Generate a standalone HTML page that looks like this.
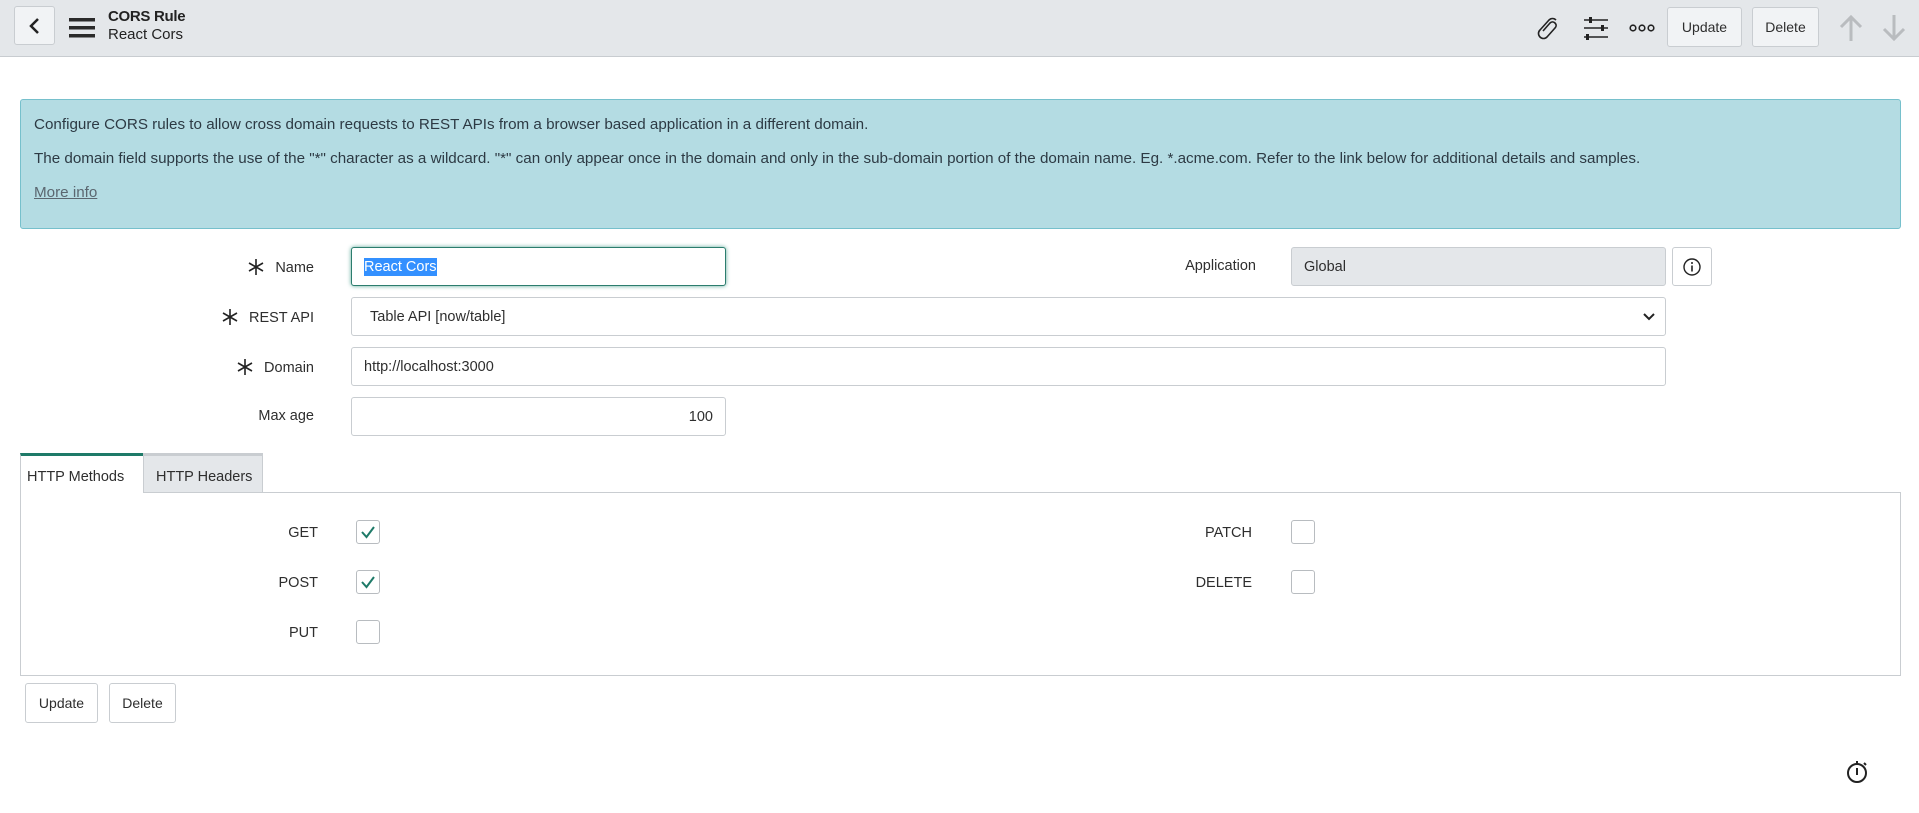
<!DOCTYPE html>
<html><head><meta charset="utf-8"><style>
*{box-sizing:border-box;margin:0;padding:0}
body{width:1919px;height:813px;background:#fff;font-family:"Liberation Sans",sans-serif;color:#2e2e2e;position:relative;overflow:hidden;font-size:14px}
.a{position:absolute}
.hdr{left:0;top:0;width:1919px;height:57px;background:#e4e7ea;border-bottom:1px solid #c8ccd0}
.btn{position:absolute;background:#f1f3f5;border:1px solid #c9cdd1;border-radius:3px;font-size:14px;display:flex;align-items:center;justify-content:center;color:#2e2e2e}
.wbtn{background:#fff}
.info{left:20px;top:99px;width:1881px;height:130px;background:#b4dce3;border:1px solid #76c0cc;border-radius:3px}
.info p{position:absolute;left:13px;font-size:15.2px;color:#2d3a44;white-space:nowrap}
.lbl{position:absolute;text-align:right;font-size:14.5px;color:#2e2e2e}
.inp{position:absolute;border:1px solid #c9cdd1;border-radius:3px;background:#fff;font-size:14.5px;display:flex;align-items:center;padding:0 12px}
.cb{position:absolute;width:24px;height:24px;border:1px solid #b8bcc0;border-radius:3px;background:#fff}
.star{display:inline-block;width:18px;height:18px;vertical-align:-4px;margin-right:10px}
</style></head><body>
<div class="a hdr"></div>
<div class="btn" style="left:14px;top:6px;width:41px;height:39px"><svg width="14" height="18" viewBox="0 0 14 18"><path d="M10 2 L3 9 L10 16" stroke="#222" stroke-width="2.5" fill="none"/></svg></div>
<svg class="a" style="left:69px;top:18px" width="26" height="20"><rect y="0" width="26" height="3.5" fill="#2a2a2a"/><rect y="8" width="26" height="3.5" fill="#2a2a2a"/><rect y="16" width="26" height="3.5" fill="#2a2a2a"/></svg>
<div class="a" style="left:108px;top:8px;font-size:15px;font-weight:bold;color:#222;letter-spacing:-0.3px">CORS Rule</div>
<div class="a" style="left:108px;top:26px;font-size:15px;color:#222">React Cors</div>
<svg class="a" style="left:1536px;top:16px" width="26" height="26" viewBox="0 0 26 26"><path d="M20 4 C18 2 15 2 13 4 L4 14 C2 16 2 19 4 21 C6 23 9 23 11 21 L19 12 C20.5 10.5 20.5 8.5 19 7 C17.5 5.5 15.5 5.5 14 7 L7 15" stroke="#222" stroke-width="1.6" fill="none"/></svg>
<svg class="a" style="left:1583px;top:16px" width="26" height="26"><path d="M1 4H25M1 12H25M1 21H25" stroke="#222" stroke-width="1.6"/><rect x="6" y="1" width="3" height="6" fill="#222"/><rect x="18" y="9" width="3" height="6" fill="#222"/><rect x="3" y="18" width="3" height="6" fill="#222"/></svg>
<svg class="a" style="left:1629px;top:23px" width="26" height="10"><circle cx="4" cy="5" r="2.8" stroke="#222" stroke-width="1.6" fill="none"/><circle cx="13" cy="5" r="2.8" stroke="#222" stroke-width="1.6" fill="none"/><circle cx="22" cy="5" r="2.8" stroke="#222" stroke-width="1.6" fill="none"/></svg>
<div class="btn" style="left:1667px;top:7px;width:75px;height:40px">Update</div>
<div class="btn" style="left:1752px;top:7px;width:67px;height:40px">Delete</div>
<svg class="a" style="left:1838px;top:14px" width="26" height="28"><path d="M13 27V3M3 13L13 3L23 13" stroke="#b9bcbf" stroke-width="3" fill="none"/></svg>
<svg class="a" style="left:1881px;top:14px" width="26" height="28"><path d="M13 1V25M3 15L13 25L23 15" stroke="#b9bcbf" stroke-width="3" fill="none"/></svg>

<div class="a info">
<p style="top:16px">Configure CORS rules to allow cross domain requests to REST APIs from a browser based application in a different domain.</p>
<p style="top:50px">The domain field supports the use of the "*" character as a wildcard. "*" can only appear once in the domain and only in the sub-domain portion of the domain name. Eg. *.acme.com. Refer to the link below for additional details and samples.</p>
<p style="top:84px;text-decoration:underline;color:#5b6770">More info</p>
</div>

<div class="lbl" style="left:150px;top:258px;width:164px"><svg class="star" viewBox="0 0 18 18"><path d="M9 1V17M2 5L16 13M16 5L2 13" stroke="#222" stroke-width="1.6"/></svg>Name</div>
<div class="inp" style="left:351px;top:247px;width:375px;height:39px;border:1px solid #2c7d6e;box-shadow:0 0 4px #5aa898"><span style="background:#3390ff;color:#fff;padding:1px 0">React Cors</span></div>
<div class="lbl" style="left:150px;top:308px;width:164px"><svg class="star" viewBox="0 0 18 18"><path d="M9 1V17M2 5L16 13M16 5L2 13" stroke="#222" stroke-width="1.6"/></svg>REST API</div>
<div class="inp" style="left:351px;top:297px;width:1315px;height:39px;padding-left:18px">Table API [now/table]<svg style="position:absolute;right:10px;top:15px" width="12" height="8"><path d="M1 1L6 6L11 1" stroke="#222" stroke-width="2" fill="none"/></svg></div>
<div class="lbl" style="left:150px;top:358px;width:164px"><svg class="star" viewBox="0 0 18 18"><path d="M9 1V17M2 5L16 13M16 5L2 13" stroke="#222" stroke-width="1.6"/></svg>Domain</div>
<div class="inp" style="left:351px;top:347px;width:1315px;height:39px">http://localhost:3000</div>
<div class="lbl" style="left:150px;top:408px;width:164px">Max age</div>
<div class="inp" style="left:351px;top:397px;width:375px;height:39px;justify-content:flex-end">100</div>
<div class="lbl" style="left:1150px;top:258px;width:106px">Application</div>
<div class="inp" style="left:1291px;top:247px;width:375px;height:39px;background:#e4e7ea">Global</div>
<div class="btn wbtn" style="left:1672px;top:247px;width:40px;height:39px"><svg width="20" height="20"><circle cx="10" cy="10" r="8" stroke="#222" stroke-width="1.4" fill="none"/><rect x="9.2" y="8.5" width="1.6" height="6" fill="#222"/><circle cx="10" cy="6" r="1" fill="#222"/></svg></div>

<div class="a" style="left:20px;top:492px;width:1881px;height:184px;border:1px solid #c9cdd1"></div>
<div class="a" style="left:20px;top:453px;width:123px;height:40px;background:#fff;border-top:3px solid #1e7a68;border-left:1px solid #c9cdd1;font-size:14.5px;padding:13px 0 0 6px">HTTP Methods</div>
<div class="a" style="left:143px;top:453px;width:120px;height:40px;background:#e4e7ea;border:1px solid #c9cdd1;border-top:3px solid #c9cdd1;font-size:14.5px;padding:13px 0 0 12px">HTTP Headers</div>
<div class="a" style="left:21px;top:492px;width:121px;height:2px;background:#fff"></div>

<div class="lbl" style="left:220px;top:525px;width:98px">GET</div>
<div class="cb" style="left:356px;top:520px"><svg width="22" height="22"><path d="M5 11L9.5 16L17 6" stroke="#1e7a68" stroke-width="2" fill="none"/></svg></div>
<div class="lbl" style="left:220px;top:575px;width:98px">POST</div>
<div class="cb" style="left:356px;top:570px"><svg width="22" height="22"><path d="M5 11L9.5 16L17 6" stroke="#1e7a68" stroke-width="2" fill="none"/></svg></div>
<div class="lbl" style="left:220px;top:625px;width:98px">PUT</div>
<div class="cb" style="left:356px;top:620px"></div>
<div class="lbl" style="left:1150px;top:525px;width:102px">PATCH</div>
<div class="cb" style="left:1291px;top:520px"></div>
<div class="lbl" style="left:1150px;top:575px;width:102px">DELETE</div>
<div class="cb" style="left:1291px;top:570px"></div>

<div class="btn wbtn" style="left:25px;top:683px;width:73px;height:40px">Update</div>
<div class="btn wbtn" style="left:109px;top:683px;width:67px;height:40px">Delete</div>

<svg class="a" style="left:1845px;top:757px" width="26" height="28"><circle cx="12" cy="16" r="9" stroke="#222" stroke-width="2" fill="none"/><path d="M12 11V18M12 4V7M19 6L21 8" stroke="#222" stroke-width="2"/></svg>
</body></html>
